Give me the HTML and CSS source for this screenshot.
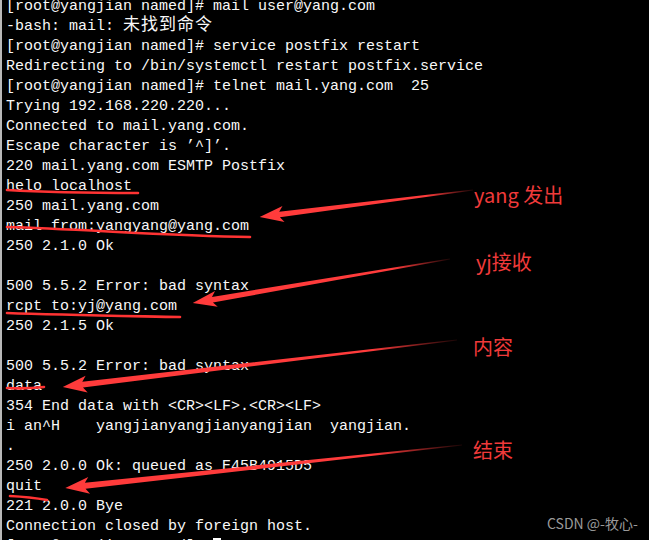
FILE: index.html
```html
<!DOCTYPE html>
<html>
<head>
<meta charset="utf-8">
<link rel="stylesheet" href="styles.css">
</head>
<body>
<div class="term">
<pre class="out">[root@yangjian named]# mail user@yang.com
-bash: mail: <span class="cjk">未找到命令</span>
[root@yangjian named]# service postfix restart
Redirecting to /bin/systemctl restart postfix.service
[root@yangjian named]# telnet mail.yang.com  25
Trying 192.168.220.220...
Connected to mail.yang.com.
Escape character is ’^]’.
220 mail.yang.com ESMTP Postfix
helo localhost
250 mail.yang.com
mail from:yangyang@yang.com
250 2.1.0 Ok

500 5.5.2 Error: bad syntax
rcpt to:yj@yang.com
250 2.1.5 Ok

500 5.5.2 Error: bad syntax
data
354 End data with &lt;CR&gt;&lt;LF&gt;.&lt;CR&gt;&lt;LF&gt;
i an^H    yangjianyangjianyangjian  yangjian.
.
250 2.0.0 Ok: queued as E45B4915D5
quit
221 2.0.0 Bye
Connection closed by foreign host.
[root@yangjian named]# <span class="cursor"></span></pre>

<div class="notes">
<svg class="ink" width="649" height="540" viewBox="0 0 649 540" xmlns="http://www.w3.org/2000/svg">
<defs>
<linearGradient id="fade" x1="0" y1="0" x2="1" y2="0">
<stop offset="0" stop-color="#ff3b3b" stop-opacity="0.1"/>
<stop offset="0.22" stop-color="#ff3b3b" stop-opacity="1"/>
<stop offset="1" stop-color="#ff3b3b" stop-opacity="1"/>
</linearGradient>
</defs>
<g fill="none" stroke="#ff3333" stroke-width="2.6" stroke-linecap="round">
<path d="M7 190 C 40 192, 100 193, 138 193"/>
<path d="M7 227 C 80 229, 170 236, 250 237"/>
<path d="M7 313 C 60 315, 130 316, 180 317"/>
<path d="M7 388 Q 25 389, 44 387"/>
<path d="M10 496 Q 30 497, 47 500"/>
</g>
<g fill="url(#fade)">
<path transform="translate(473 190) rotate(172.78)" d="M0,-0.6 L195,-2.8 L191,-8 L215,0 L191,8 L195,2.8 L0,0.6Z"/>
<path transform="translate(450 259) rotate(170.29)" d="M0,-0.6 L241,-2.8 L237,-8 L261,0 L237,8 L241,2.8 L0,0.6Z"/>
<path transform="translate(457 340) rotate(173.2)" d="M0,-0.6 L377,-3 L373,-8.5 L397,0 L373,8.5 L377,3 L0,0.6Z"/>
<path transform="translate(462 445) rotate(173.82)" d="M0,-0.6 L379,-3 L375,-8.5 L399,0 L375,8.5 L379,3 L0,0.6Z"/>
</g>
</svg>
<div class="label l1">yang 发出</div>
<div class="label l2">yj接收</div>
<div class="label l3">内容</div>
<div class="label l4">结束</div>
<div class="mark">CSDN @-牧心-</div>
</div>
</div>
</body>
</html>
```

FILE: styles.css
```css
html, body {
  margin: 0;
  padding: 0;
  background: #000;
}

body {
  width: 649px;
  height: 540px;
  overflow: hidden;
}

.term {
  position: relative;
  width: 649px;
  height: 540px;
  overflow: hidden;
  background: #000;
  border-left: 2px solid #b8b8b8;
  box-sizing: border-box;
}

.out {
  margin: -3px 0 0 0;
  padding: 0 0 0 4px;
  font-family: "Liberation Mono", "DejaVu Sans Mono", monospace;
  font-size: 15px;
  line-height: 20px;
  color: #f8f8f8;
  white-space: pre;
}

.cjk {
  font-family: "Noto Sans CJK SC", sans-serif;
  font-size: 17px;
  letter-spacing: 1px;
  line-height: 0;
}

.cursor {
  display: inline-block;
  width: 8px;
  height: 16px;
  background: #fff;
  vertical-align: -4px;
}

.notes {
  position: absolute;
  left: -2px;
  top: 0;
  width: 649px;
  height: 540px;
  pointer-events: none;
}

.ink {
  position: absolute;
  left: 0;
  top: 0;
}

.label {
  position: absolute;
  font-family: "Noto Sans CJK SC", "Noto Sans", sans-serif;
  font-size: 20px;
  line-height: 20px;
  color: #f03a3a;
  white-space: nowrap;
}

.l1 { left: 474px; top: 185px; }
.l2 { left: 476px; top: 252px; }
.l3 { left: 473px; top: 337px; }
.l4 { left: 473px; top: 440px; }

.mark {
  position: absolute;
  left: 547px;
  top: 514px;
  font-family: "Noto Sans CJK SC", "Noto Sans", sans-serif;
  font-size: 14px;
  line-height: 18px;
  color: #9a9a9a;
  white-space: nowrap;
}
```
